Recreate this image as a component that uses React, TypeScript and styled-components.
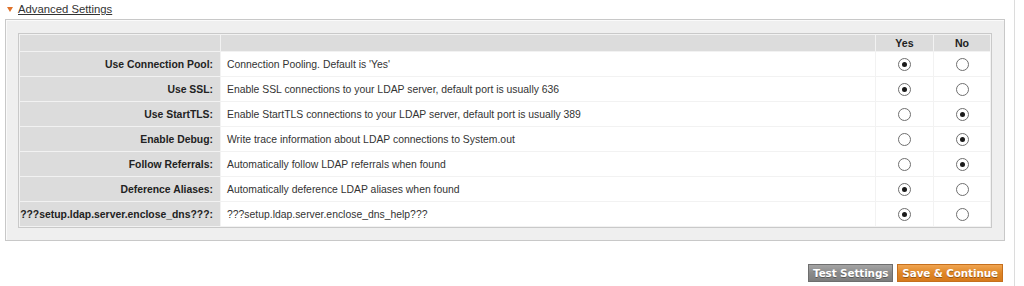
import React from "react";
import styled, { createGlobalStyle } from "styled-components";

const Global = createGlobalStyle`
  html, body { margin: 0; padding: 0; background: #fff; }
  body { font-family: "Liberation Sans", Arial, sans-serif; color: #333; }
`;

const Page = styled.div`
  width: 1015px;
  height: 286px;
  border-right: 1px solid #dcdcdc;
  box-sizing: border-box;
  display: flex;
  flex-direction: column;
`;

const Toggle = styled.div`
  display: flex;
  align-items: center;
  gap: 5px;
  height: 18px;
  padding-left: 7px;
`;

const Arrow = styled.span`
  width: 0;
  height: 0;
  border-left: 3.5px solid transparent;
  border-right: 3.5px solid transparent;
  border-top: 5px solid #e0722a;
  margin-top: 1px;
`;

const ToggleLink = styled.a`
  font-size: 11.3px;
  color: #333;
  text-decoration: underline;
  line-height: 14px;
`;

const Panel = styled.div`
  margin: 1px 0 0 5px;
  width: 1000px;
  box-sizing: border-box;
  background: #efefef;
  border: 1px solid #c8c8c8;
  box-shadow: inset 1px 1px 0 #fafafa;
  padding: 13px 12px 12px 12px;
`;

const Table = styled.table`
  width: 974px;
  border-collapse: separate;
  border-spacing: 1px;
  background: #f2f2f2;
  border: 1px solid #c9c9c9;
  box-sizing: border-box;
  font-size: 10.4px;
  table-layout: fixed;
`;

const HeadCell = styled.th<{ $w?: number }>`
  background: #dcdcdc;
  height: 16px;
  padding: 0;
  font-weight: bold;
  font-size: 10.6px;
  color: #222;
  text-align: center;
  width: ${(p) => (p.$w ? `${p.$w}px` : "auto")};
`;

const Label = styled.td`
  background: #dcdcdc;
  height: 24px;
  padding: 0 7px 0 0;
  text-align: right;
  font-weight: bold;
  color: #222;
  white-space: nowrap;
`;

const Desc = styled.td`
  background: #fff;
  height: 24px;
  padding: 0 0 0 6px;
  color: #333;
`;

const RadioCell = styled.td`
  background: #fff;
  height: 24px;
  padding: 0;
  text-align: center;
`;

const Radio = styled.span<{ $on?: boolean }>`
  display: inline-block;
  vertical-align: middle;
  width: 11px;
  height: 11px;
  border-radius: 50%;
  border: 1px solid #6f6f6f;
  background: #fff;
  position: relative;
  &::after {
    content: "";
    display: ${(p) => (p.$on ? "block" : "none")};
    position: absolute;
    left: 3px;
    top: 3px;
    width: 5px;
    height: 5px;
    border-radius: 50%;
    background: #1a1a1a;
  }
`;

const Footer = styled.div`
  display: flex;
  justify-content: flex-end;
  gap: 4px;
  padding: 23px 11px 0 0;
`;

const Button = styled.button<{ $primary?: boolean }>`
  font-family: "DejaVu Sans", Verdana, sans-serif;
  font-weight: bold;
  font-size: 10.4px;
  letter-spacing: -0.1px;
  color: #fff;
  height: 18px;
  line-height: 14px;
  padding: 0 4px;
  border: 1px solid ${(p) => (p.$primary ? "#c66f1c" : "#6e6e6e")};
  background: ${(p) =>
    p.$primary
      ? "linear-gradient(#f0a552, #df8626 50%, #d67a1c)"
      : "linear-gradient(#a5a5a5, #8a8a8a 50%, #7d7d7d)"};
  text-shadow: 0 1px 0 rgba(0, 0, 0, 0.35);
  cursor: pointer;
`;

const rows: { label: string; desc: string; yes: boolean }[] = [
  { label: "Use Connection Pool:", desc: "Connection Pooling. Default is 'Yes'", yes: true },
  { label: "Use SSL:", desc: "Enable SSL connections to your LDAP server, default port is usually 636", yes: true },
  { label: "Use StartTLS:", desc: "Enable StartTLS connections to your LDAP server, default port is usually 389", yes: false },
  { label: "Enable Debug:", desc: "Write trace information about LDAP connections to System.out", yes: false },
  { label: "Follow Referrals:", desc: "Automatically follow LDAP referrals when found", yes: false },
  { label: "Deference Aliases:", desc: "Automatically deference LDAP aliases when found", yes: true },
  { label: "???setup.ldap.server.enclose_dns???:", desc: "???setup.ldap.server.enclose_dns_help???", yes: true },
];

export default function App() {
  return (
    <>
      <Global />
      <Page>
        <Toggle>
          <Arrow />
          <ToggleLink>Advanced Settings</ToggleLink>
        </Toggle>
        <Panel>
          <Table>
            <thead>
              <tr>
                <HeadCell $w={200} />
                <HeadCell />
                <HeadCell $w={57}>Yes</HeadCell>
                <HeadCell $w={56}>No</HeadCell>
              </tr>
            </thead>
            <tbody>
              {rows.map((r) => (
                <tr key={r.label}>
                  <Label>{r.label}</Label>
                  <Desc>{r.desc}</Desc>
                  <RadioCell>
                    <Radio $on={r.yes} />
                  </RadioCell>
                  <RadioCell>
                    <Radio $on={!r.yes} />
                  </RadioCell>
                </tr>
              ))}
            </tbody>
          </Table>
        </Panel>
        <Footer>
          <Button>Test Settings</Button>
          <Button $primary>Save &amp; Continue</Button>
        </Footer>
      </Page>
    </>
  );
}
